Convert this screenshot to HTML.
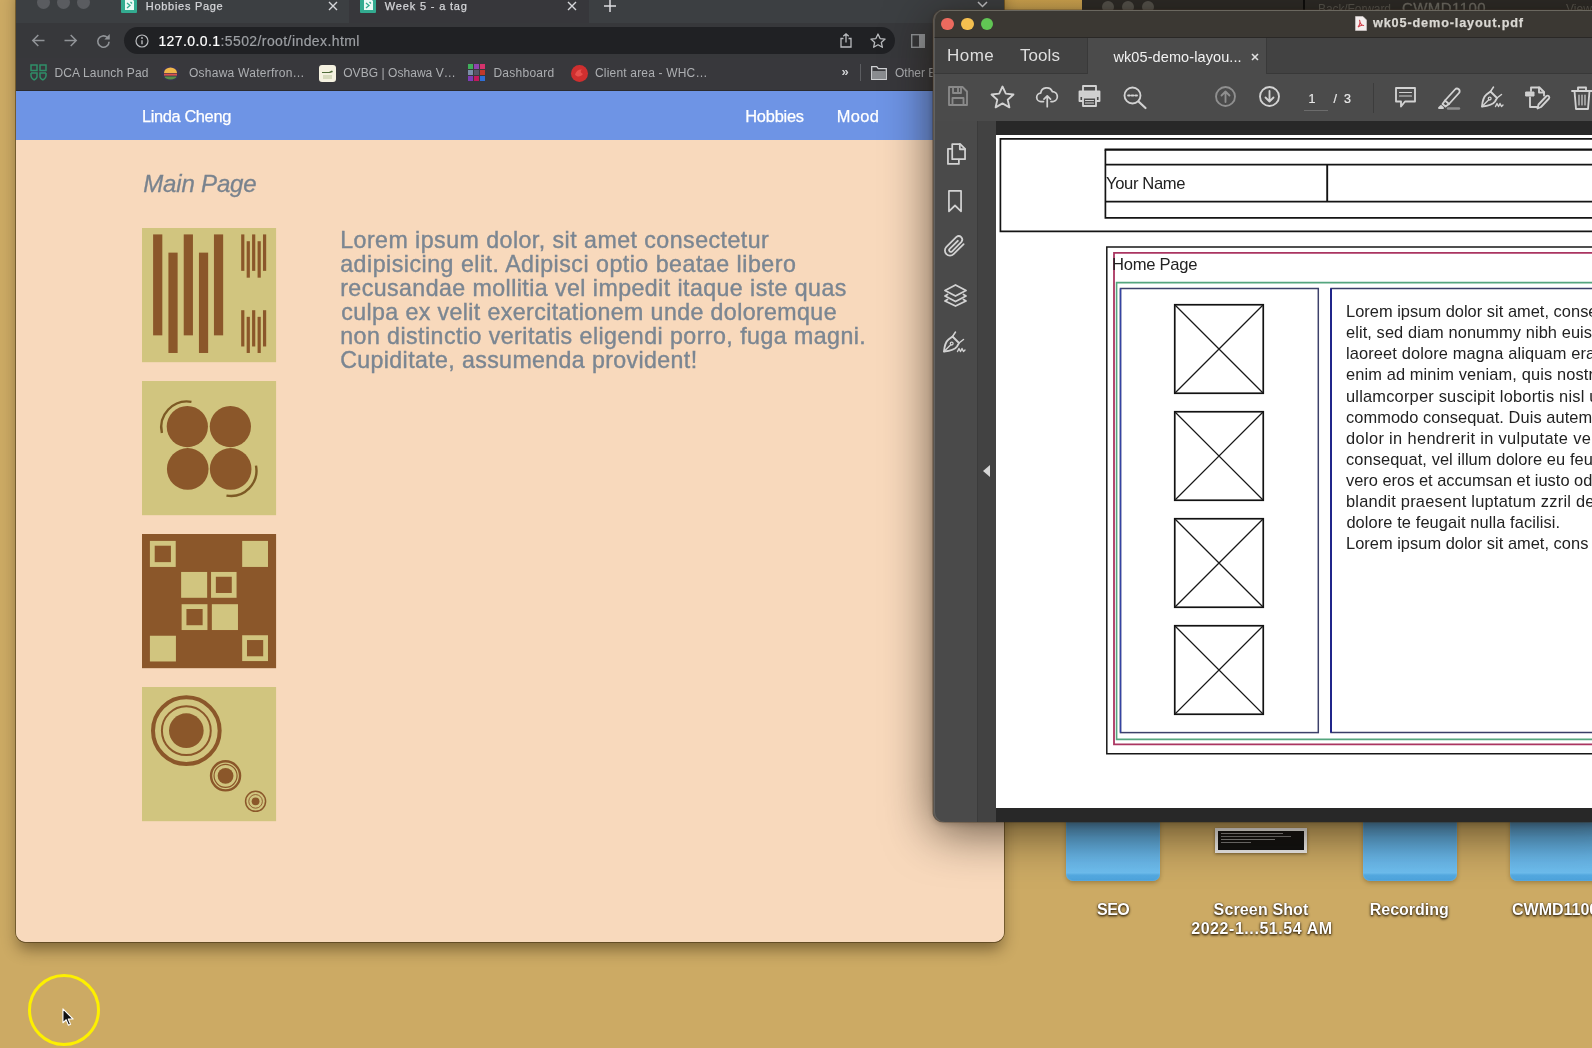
<!DOCTYPE html>
<html lang="en">
<head>
<meta charset="utf-8">
<title>Hobbies Page</title>
<style>
*{box-sizing:border-box;margin:0;padding:0}
html,body{width:1592px;height:1048px;overflow:hidden}
body{position:relative;background:#ccaa64;font-family:"Liberation Sans",sans-serif}
.abs{position:absolute}
.t{position:absolute;white-space:nowrap;line-height:1;transform-origin:0 0}
svg{position:absolute;overflow:visible}

/* ---------- browser window ---------- */
#browser{position:absolute;left:16px;top:-20px;width:988px;height:962px;border-radius:10px;background:#f8d9bc;box-shadow:0 9px 16px -2px rgba(30,18,0,.46),0 0 0 .8px rgba(60,42,10,.6);will-change:transform}
#bclip{position:absolute;left:0;top:20px;width:988px;height:942px;border-radius:0 0 10px 10px;overflow:hidden}
#tabstrip{position:absolute;left:0;top:0;width:988px;height:23px;background:#3c3f42}
#acttab{position:absolute;left:333px;top:-6px;width:240px;height:29px;border-radius:8px 8px 0 0;background:#37373b}
#toolbar{position:absolute;left:0;top:23px;width:988px;height:35px;background:#37383b}
#bookmarks{position:absolute;left:0;top:58px;width:988px;height:33px;background:#38383c;border-bottom:1px solid #2b2b2e}
#urlpill{position:absolute;left:108.4px;top:4.2px;width:771px;height:27px;border-radius:14px;background:#202124}
.bm{color:#adafb2;font-size:12px;top:9px}
.tabt{color:#d4d5d8;font-size:11px;top:.6px;-webkit-text-stroke:.25px #d4d5d8}
#nav{position:absolute;left:0;top:91px;width:988px;height:49px;background:#6e94e5}
.navt{color:#fff;font-size:16.4px;top:108px;-webkit-text-stroke:.25px #fff}
#page{position:absolute;left:0;top:140px;width:988px;height:802px;background:#f8d9bc}
#h1{color:#79838e;font-size:24px;font-style:italic;-webkit-text-stroke:.3px #79838e}
.pl{color:#7b8692;font-size:23.2px;left:324px;-webkit-text-stroke:.4px #7b8692}
.img{position:absolute;left:126.3px;width:134.1px;height:134.2px}

/* ---------- pdf window ---------- */
#pdf{position:absolute;left:933px;top:10px;width:700px;height:812px;border-radius:10px;background:#4a4a4a;box-shadow:0 10px 48px 0 rgba(20,12,0,.64),0 2px 6px 0 rgba(20,12,0,.2),0 0 0 .6px rgba(90,75,60,.55);will-change:transform}
#pclip{position:absolute;left:0;top:0;width:700px;height:812px;border-radius:10px;overflow:hidden;box-shadow:none}
#ptitle{position:absolute;left:0;top:0;width:700px;height:28px;background:#3b3833;border-top:1px solid #6a675f;border-bottom:1px solid #2a2826}
#ptabs{position:absolute;left:0;top:28px;width:700px;height:36px;background:#424242;border-bottom:1px solid #383838}
#ptabact{position:absolute;left:154.4px;top:0;width:180px;height:36px;background:#4b4b4b;border-left:1px solid #393939;border-right:1px solid #393939}
#ptool{position:absolute;left:0;top:64px;width:700px;height:46.5px;background:#4b4b4b}
#pdark{position:absolute;left:63px;top:110.5px;width:655px;height:702px;background:#282828}
#pside{position:absolute;left:0;top:110.5px;width:44px;height:702px;background:#4a4a4a}
#pgut{position:absolute;left:44px;top:110.5px;width:19px;height:702px;background:#424242;border-left:1px solid #3b3b3b}
#doc{position:absolute;left:63px;top:124.5px;width:640px;height:673.3px;background:#fff;overflow:hidden}
.ln{position:absolute;background:#1a1a1a}
.box{position:absolute;left:178.05px;width:90px;height:90px}
.dl{color:#222;font-size:16.4px;left:284px}
.ico{stroke:#d2d2d2;fill:none;stroke-width:1.85;stroke-linecap:round;stroke-linejoin:round}

/* ---------- desktop ---------- */
.folder{position:absolute;top:790px;width:94px;height:91px;border-radius:7px;background:linear-gradient(#4a86b2 0,#5094c6 36%,#5cabe0 52%,#69b9ec 76%,#6fbff0 91%,#55abe3 93.5%,#4ca2db 100%);box-shadow:0 2px 4px rgba(60,40,0,.3),inset 0 0 0 1px rgba(120,200,255,.18)}
.lbl{color:#fff;font-weight:bold;font-size:16px;text-shadow:0 1px 3px rgba(40,25,0,.9),0 1px 2px rgba(40,25,0,.7),0 0 1px rgba(40,25,0,.5)}
</style>
</head>
<body>

<!-- top desktop strip highlight -->
<div class="abs" style="left:1004px;top:0;width:78px;height:11px;background:linear-gradient(#d7ab52,#cfa654)"></div>

<!-- finder window behind -->
<div class="abs" id="finder" style="will-change:transform;left:1082px;top:-20px;width:520px;height:40px;background:#2d2b28;overflow:hidden">
  <div class="abs" style="left:221px;top:0;width:1.5px;height:40px;background:#0c0c0c"></div>
  <div class="abs" style="left:20px;top:20.5px;width:12px;height:12px;border-radius:6px;background:#56544e"></div>
  <div class="abs" style="left:40px;top:20.5px;width:12px;height:12px;border-radius:6px;background:#56544e"></div>
  <div class="abs" style="left:60px;top:20.5px;width:12px;height:12px;border-radius:6px;background:#56544e"></div>
  <span class="t" id="f1" style="left:236px;top:22.5px;font-size:12px;color:#595751;letter-spacing:-0.09px">Back/Forward</span>
  <span class="t" id="f2" style="left:320px;top:20px;font-size:15px;color:#6f6d66;-webkit-text-stroke:.3px #6f6d66;letter-spacing:0.43px">CWMD1100</span>
  <span class="t" id="f3" style="left:484px;top:22.5px;font-size:12px;color:#595751">View</span>
</div>

<div id="browser"><div id="bclip">
  <div id="tabstrip">
    <div id="acttab"></div>
    <!-- inactive traffic lights -->
    <div class="abs" style="left:20.5px;top:-4.5px;width:13px;height:13px;border-radius:6.5px;background:#5a5c60"></div>
    <div class="abs" style="left:40.5px;top:-4.5px;width:13px;height:13px;border-radius:6.5px;background:#5a5c60"></div>
    <div class="abs" style="left:60.5px;top:-4.5px;width:13px;height:13px;border-radius:6.5px;background:#5a5c60"></div>
    <!-- favicons -->
    <svg style="left:104.5px;top:-3px" width="16" height="16" viewBox="0 0 16 16"><rect width="16" height="16" rx="1" fill="#33ab90"/><path d="M4 1h6l3 3v9H4z" fill="#eafaf5"/><path d="M6 6l3 2.5L6 11M9.5 5l1.5 1.5" stroke="#33ab90" stroke-width="1.3" fill="none"/></svg>
    <span class="t tabt" id="tab1" style="left:129.8px;letter-spacing:0.71px">Hobbies Page</span>
    <svg style="left:312px;top:1px" width="10" height="10" viewBox="0 0 10 10"><path d="M1 1l8 8M9 1l-8 8" stroke="#d6d7da" stroke-width="1.4" fill="none"/></svg>
    <svg style="left:344px;top:-3px" width="16" height="16" viewBox="0 0 16 16"><rect width="16" height="16" rx="1" fill="#33ab90"/><path d="M4 1h6l3 3v9H4z" fill="#eafaf5"/><path d="M6 6l3 2.5L6 11M9.5 5l1.5 1.5" stroke="#33ab90" stroke-width="1.3" fill="none"/></svg>
    <span class="t tabt" id="tab2" style="left:368.8px;letter-spacing:0.83px">Week 5 - a tag</span>
    <svg style="left:551px;top:1px" width="10" height="10" viewBox="0 0 10 10"><path d="M1 1l8 8M9 1l-8 8" stroke="#d6d7da" stroke-width="1.4" fill="none"/></svg>
    <svg style="left:588px;top:0px" width="12" height="12" viewBox="0 0 12 12"><path d="M6 0v12M0 6h12" stroke="#dcdde0" stroke-width="1.5" fill="none"/></svg>
    <svg style="left:961px;top:1px" width="11" height="7" viewBox="0 0 11 7"><path d="M1 1l4.5 4.5L10 1" stroke="#c9cacd" stroke-width="1.5" fill="none"/></svg>
  </div>
  <div id="toolbar">
    <svg style="left:16px;top:11px" width="13" height="13" viewBox="0 0 13 13"><path d="M12.5 6.5H1M6.3 1L.8 6.5 6.3 12" stroke="#909397" stroke-width="1.5" fill="none"/></svg>
    <svg style="left:48px;top:11px" width="13" height="13" viewBox="0 0 13 13"><path d="M.5 6.5H12M6.7 1l5.5 5.5L6.7 12" stroke="#909397" stroke-width="1.5" fill="none"/></svg>
    <svg style="left:80px;top:9.5px" width="15.5" height="16" viewBox="0 0 14 15"><path d="M12 8.2A5.3 5.3 0 1 1 10.4 4.2" stroke="#909397" stroke-width="1.5" fill="none"/><path d="M12.6 1v5h-5z" fill="#909397"/></svg>
    <div id="urlpill">
      <svg style="left:11px;top:7px" width="14" height="14" viewBox="0 0 14 14"><circle cx="7" cy="7" r="6" stroke="#b9bbbe" stroke-width="1.2" fill="none"/><path d="M7 6.2v4" stroke="#b9bbbe" stroke-width="1.4"/><circle cx="7" cy="4" r=".9" fill="#b9bbbe"/></svg>
      <span class="t" id="url" style="left:34px;top:6.5px;font-size:14px;color:#fff;-webkit-text-stroke:.2px #fff;letter-spacing:0.41px">127.0.0.1<span style="color:#9c9fa3;-webkit-text-stroke:.2px #9c9fa3">:5502/root/index.html</span></span>
      <svg style="left:716px;top:6px" width="12" height="15" viewBox="0 0 12 15"><path d="M3.5 5.5H1V14h10V5.5H8.5M6 9.5V1M3.3 3.3L6 .8l2.7 2.5" stroke="#b9bbbe" stroke-width="1.3" fill="none"/></svg>
      <svg style="left:746px;top:6px" width="16" height="15" viewBox="0 0 16 15"><path d="M8 1l2.1 4.6 5 .5-3.8 3.3 1.1 4.9L8 11.8l-4.4 2.5 1.1-4.9L.9 6.1l5-.5z" stroke="#b9bbbe" stroke-width="1.3" fill="none" stroke-linejoin="round"/></svg>
    </div>
    <svg style="left:895px;top:11px" width="14" height="14" viewBox="0 0 14 14"><rect x=".7" y=".7" width="12.6" height="12.6" stroke="#909397" stroke-width="1.4" fill="none"/><rect x="8" y="1" width="5.5" height="12" fill="#909397"/></svg>
  </div>
  <div id="bookmarks">
    <svg style="left:14px;top:6px" width="17" height="17" viewBox="0 0 17 17"><g stroke="#2f8f68" stroke-width="1.5" fill="none"><rect x="1" y="1" width="6" height="5.5"/><rect x="10" y="1" width="6" height="5.5"/><path d="M1 9h6v3.5c0 2-3 3.5-3 3.5M16 9h-6v3.5c0 2 3 3.5 3 3.5M1 9v3c0 2 2.5 3.5 3 4M16 9v3c0 2-2.5 3.5-3 4"/></g></svg>
    <svg style="left:144.5px;top:7px" width="19" height="16" viewBox="0 0 19 16"><ellipse cx="9.5" cy="8" rx="9.5" ry="8" fill="#3a3558" opacity=".55"/><path d="M3 8a6.5 5.5 0 0 1 13 0z" fill="#f0b64a"/><rect x="3" y="8.6" width="13" height="2" fill="#d9534f"/><path d="M3.5 11.5h12a6 3 0 0 1-12 0z" fill="#5a8f4a"/></svg>
    <svg style="left:302.5px;top:6.5px" width="17" height="17" viewBox="0 0 17 17"><rect width="17" height="17" rx="3" fill="#f4f1e0"/><path d="M3 7h7l3-1.5 1 1.5-3 1H3z" fill="#4f6b3a"/><path d="M4 11h9M4 13h9" stroke="#b9c39a" stroke-width="1"/></svg>
    <svg style="left:452px;top:6px" width="18" height="17" viewBox="0 0 18 17"><rect x="0" y="0" width="5" height="5" fill="#3fae5a"/><rect x="6" y="0" width="5" height="5" fill="#8e44ad"/><rect x="12" y="0" width="5" height="5" fill="#d6336c"/><rect x="0" y="6" width="5" height="5" fill="#7b8ea8"/><rect x="6" y="6" width="5" height="5" fill="#556"/><rect x="12" y="6" width="5" height="5" fill="#c0392b"/><rect x="0" y="12" width="5" height="5" fill="#7d3cb5"/><rect x="6" y="12" width="5" height="5" fill="#c2185b"/><rect x="12" y="12" width="5" height="5" fill="#2f6fd6"/></svg>
    <svg style="left:555px;top:6.5px" width="17" height="17" viewBox="0 0 17 17"><circle cx="8.5" cy="8.5" r="8.5" fill="#cf2f2f"/><path d="M4 9.5C5 6 8 4 11 4.5 9 6 9.5 8 12 9c-2 3-6 3.5-8 .5z" fill="#e8504c"/></svg>
    <span class="t bm" id="bm1" style="left:38.4px;letter-spacing:0.15px">DCA Launch Pad</span>
    <span class="t bm" id="bm2" style="left:173px;letter-spacing:0.25px">Oshawa Waterfron…</span>
    <span class="t bm" id="bm3" style="left:327.2px;letter-spacing:0.05px">OVBG | Oshawa V…</span>
    <span class="t bm" id="bm4" style="left:477.4px;letter-spacing:0.27px">Dashboard</span>
    <span class="t bm" id="bm5" style="left:579px;letter-spacing:0.18px">Client area - WHC…</span>
    <span class="t" id="bm6" style="left:825.5px;top:7px;font-size:13px;font-weight:bold;color:#d0d1d4">»</span>
    <div class="abs" style="left:844px;top:6px;width:1px;height:17px;background:#5c5d61"></div>
    <svg style="left:855px;top:7.5px" width="16" height="14" viewBox="0 0 16 14"><path d="M.7 13.3V.7h5l1.6 2h8v10.6z" stroke="#d0d1d4" stroke-width="1.3" fill="none"/><rect x="1" y="5" width="14" height="8" fill="#8a8c90"/></svg>
    <span class="t bm" id="bm7" style="left:879px">Other Bookmarks</span>
  </div>
  <div id="nav">
    <span class="t navt" id="nav1" style="left:125.9px;top:16.5px;letter-spacing:-0.36px">Linda Cheng</span>
    <span class="t navt" id="nav2" style="left:729.2px;top:16.5px;letter-spacing:-0.21px">Hobbies</span>
    <span class="t navt" id="nav3" style="left:820.8px;top:16.5px;letter-spacing:0.35px">Mood</span>
  </div>
  <div id="page">
    <span class="t" id="h1" style="left:127.2px;top:32px;letter-spacing:-0.16px">Main Page</span>
    <svg class="img" style="top:88.2px" viewBox="0 0 134 134" preserveAspectRatio="none"><rect width="134" height="134" fill="#d1c57f"/><g transform="translate(1.1 0)"><g fill="#8b572a"><rect x="10" y="6.4" width="9.2" height="100.8"/><rect x="25.3" y="24.6" width="9.2" height="100.2"/><rect x="40.6" y="6.4" width="9.2" height="100.8"/><rect x="55.8" y="24.6" width="9.2" height="100.2"/><rect x="70.8" y="6.4" width="9.2" height="100.8"/><rect x="98" y="6.4" width="3.2" height="36.4"/><rect x="103.5" y="13.2" width="3.2" height="36.4"/><rect x="108.9" y="6.4" width="3.2" height="36.4"/><rect x="114.4" y="13.2" width="3.2" height="36.4"/><rect x="119.8" y="6.4" width="3.2" height="36.4"/><rect x="98" y="82.1" width="3.2" height="36.2"/><rect x="103.5" y="88.7" width="3.2" height="36.1"/><rect x="108.9" y="82.1" width="3.2" height="36.2"/><rect x="114.4" y="88.7" width="3.2" height="36.1"/><rect x="119.8" y="82.1" width="3.2" height="36.2"/></g></g></svg>
<svg class="img" style="top:241px" viewBox="0 0 134 134" preserveAspectRatio="none"><rect width="134" height="134" fill="#d1c57f"/><g transform="translate(.9 0)"><g fill="#8b572a"><circle cx="44.4" cy="45.5" r="20.6"/><circle cx="87.4" cy="45.5" r="20.6"/><circle cx="44.8" cy="87.8" r="20.8"/><circle cx="87.7" cy="87.8" r="20.8"/></g><g fill="none" stroke="#7d5a24" stroke-width="2.4"><path d="M19 52A25.8 25.8 0 0 1 48.5 20.8"/><path d="M113 84.5A25.5 25.5 0 0 1 83.5 114.4"/></g></g></svg>
<svg class="img" style="top:393.8px" viewBox="0 0 134 134" preserveAspectRatio="none"><rect width="134" height="134" fill="#8b572a"/><g transform="translate(0 0)"><g fill="#d1c57f"><rect x="100.1" y="6.9" width="25.8" height="26"/><rect x="39.1" y="37.9" width="26" height="25.8"/><rect x="69.8" y="70.1" width="26.1" height="25.8"/><rect x="7.9" y="101.6" width="26" height="25.7"/></g><g fill="none" stroke="#d1c57f" stroke-width="4.8"><rect x="10.3" y="9.3" width="21" height="21.2"/><rect x="71.4" y="40.3" width="20.7" height="21"/><rect x="42" y="72.5" width="21" height="21"/><rect x="102.5" y="103.5" width="21" height="21"/></g></g></svg>
<svg class="img" style="top:546.6px" viewBox="0 0 134 134" preserveAspectRatio="none"><rect width="134" height="134" fill="#d1c57f"/><g transform="translate(.5 0)"><g fill="#8b572a"><circle cx="43.8" cy="43.6" r="17.3"/><circle cx="83" cy="88.7" r="7.9"/><circle cx="113" cy="114.2" r="3.9"/></g><g fill="none" stroke="#8b572a"><circle cx="43.8" cy="43.6" r="33.3" stroke-width="4"/><circle cx="43.8" cy="43.6" r="24.4" stroke-width="2"/><circle cx="83" cy="88.7" r="14.5" stroke-width="2.4"/><circle cx="83" cy="88.7" r="11.5" stroke-width="1.2"/><circle cx="113" cy="114.2" r="10" stroke-width="1.5"/><circle cx="113" cy="114.2" r="6.8" stroke-width=".9"/></g></g></svg>

    <span class="t pl" id="p1" style="top:89.4px;letter-spacing:0.46px;left:324.2px">Lorem ipsum dolor, sit amet consectetur</span>
    <span class="t pl" id="p2" style="top:113.4px;letter-spacing:0.5px;left:324.2px">adipisicing elit. Adipisci optio beatae libero</span>
    <span class="t pl" id="p3" style="top:137.4px;letter-spacing:0.43px;left:324.2px">recusandae mollitia vel impedit itaque iste quas</span>
    <span class="t pl" id="p4" style="top:161.4px;letter-spacing:0.39px;left:325.2px">culpa ex velit exercitationem unde doloremque</span>
    <span class="t pl" id="p5" style="top:185.4px;letter-spacing:0.45px;left:324.2px">non distinctio veritatis eligendi porro, fuga magni.</span>
    <span class="t pl" id="p6" style="top:209.4px;letter-spacing:0.37px;left:324.2px">Cupiditate, assumenda provident!</span>
  </div>
</div></div>


<div id="desk" style="will-change:transform">
  <div class="folder" style="left:1066px"></div>
  <div class="folder" style="left:1362.5px"></div>
  <div class="folder" style="left:1510px"></div>
  <div class="abs" style="left:1215px;top:828px;width:92px;height:24.5px;background:#111;border:3px solid #f2f0ee;border-top-width:3.5px;box-shadow:0 1px 3px rgba(40,25,0,.5)">
    <div class="abs" style="left:3px;top:2px;width:62px;height:1px;background:#8a8a8a"></div>
    <div class="abs" style="left:3px;top:5px;width:70px;height:1px;background:#7a7a7a"></div>
    <div class="abs" style="left:3px;top:8px;width:54px;height:1px;background:#8a8a8a"></div>
    <div class="abs" style="left:3px;top:11px;width:30px;height:1px;background:#7a7a7a"></div>
  </div>
  <span class="t lbl" id="d1" style="left:1097px;top:901.7px;letter-spacing:-0.5px">SEO</span>
  <span class="t lbl" id="d2" style="left:1213.6px;top:901.7px;letter-spacing:0.14px">Screen Shot</span>
  <span class="t lbl" id="d3" style="left:1191.2px;top:920.6px;letter-spacing:0.56px">2022-1...51.54 AM</span>
  <span class="t lbl" id="d4" style="left:1369.8px;top:901.7px;letter-spacing:-0.03px">Recording</span>
  <span class="t lbl" id="d5" style="left:1512px;top:901.7px">CWMD1100</span>
</div>


<div id="pdf"><div id="pclip">
  <div id="ptitle">
    <div class="abs" style="left:8px;top:6.6px;width:12.5px;height:12.5px;border-radius:6.3px;background:#ec6a5e"></div>
    <div class="abs" style="left:28px;top:6.6px;width:12.5px;height:12.5px;border-radius:6.3px;background:#f4bf4f"></div>
    <div class="abs" style="left:47.5px;top:6.6px;width:12.5px;height:12.5px;border-radius:6.3px;background:#61c554"></div>
    <svg style="left:422px;top:5px" width="12" height="15" viewBox="0 0 12 15"><path d="M.5.5h7.5l3.5 3.5v10.5H.5z" fill="#f4eeee" stroke="#d9d0d0" stroke-width=".6"/><path d="M4.5 4c1 2 0 5-1.5 7 2-1.5 4-2 6-1.5-2 0-4-2-4.5-5.5z" fill="none" stroke="#d0404a" stroke-width="1.1"/></svg>
    <span class="t" id="ptt" style="left:440px;top:5.9px;font-size:12.7px;font-weight:bold;color:#dad8d3;-webkit-text-stroke:.25px #dad8d3;letter-spacing:0.85px">wk05-demo-layout.pdf</span>
  </div>
  <div id="ptabs">
    <div id="ptabact"></div>
    <span class="t" id="pt1" style="left:14.1px;top:9px;font-size:17px;color:#dedede;letter-spacing:0.43px">Home</span>
    <span class="t" id="pt2" style="left:87.1px;top:9px;font-size:17px;color:#dedede;letter-spacing:0.03px">Tools</span>
    <span class="t" id="pt3" style="left:180.4px;top:12px;font-size:14.5px;color:#f2f2f2;letter-spacing:0.1px">wk05-demo-layou...</span>
    <svg style="left:317.8px;top:14.8px" width="8" height="8" viewBox="0 0 8 8"><path d="M1 1l6 6M7 1L1 7" stroke="#e0e0e0" stroke-width="1.6" fill="none"/></svg>
  </div>
  <div id="ptool">
    <!-- save -->
    <svg class="ico" style="left:15px;top:12.3px;stroke:#8a8a8a" width="20" height="20" viewBox="0 0 20 20"><path d="M1 1h13.5L19 5.5V19H1z"/><path d="M5 1v6h8V1M4.5 19v-7h11v7M10 2.5v3"/></svg>
    <!-- star -->
    <svg class="ico" style="left:56.5px;top:10.8px" width="25" height="24" viewBox="0 0 25 24"><path d="M12.5 1.5l3.3 7.2 7.7.8-5.8 5.2 1.7 7.7-6.9-4-6.9 4 1.7-7.7L1.5 9.5l7.7-.8z"/></svg>
    <!-- cloud upload -->
    <svg class="ico" style="left:102.5px;top:12.8px" width="22.5" height="20.6" viewBox="0 0 24 22"><path d="M8 15.5H5.5a4.5 4.5 0 0 1-.5-9A6.5 6.5 0 0 1 17.5 5a5.3 5.3 0 0 1 1 10.5H16"/><path d="M12 21V10M8.5 13L12 9.5l3.5 3.5"/></svg>
    <!-- print -->
    <svg class="ico" style="left:145px;top:11.3px" width="23" height="22" viewBox="0 0 23 22"><path d="M5 6.5V1h13v5.5M5 16H1.5V6.5h20V16H18M5 12.5h13V21H5z"/><path d="M2 7h19v5H2z" fill="#cfcfcf" stroke="none"/><path d="M7.5 15.5h8M7.5 18h8" stroke-width="1.2"/></svg>
    <!-- zoom -->
    <svg class="ico" style="left:190px;top:12.3px" width="24" height="24" viewBox="0 0 24 24"><circle cx="9.5" cy="9.5" r="8"/><path d="M15.5 15.5L22.5 22" stroke-width="2.2"/><path d="M5.2 9.5h1.5M8.8 9.5h1.5M12.4 9.5h1.5" stroke-width="2.2"/></svg>
    <!-- up / down -->
    <svg class="ico" style="left:281.5px;top:12.3px;stroke:#8f8f8f" width="21" height="21" viewBox="0 0 21 21"><circle cx="10.5" cy="10.5" r="9.5"/><path d="M10.5 16V5.5M6.5 9.5l4-4 4 4"/></svg>
    <svg class="ico" style="left:325.5px;top:12.3px" width="21" height="21" viewBox="0 0 21 21"><circle cx="10.5" cy="10.5" r="9.5"/><path d="M10.5 5v10.5M6.5 11.5l4 4 4-4"/></svg>
    <span class="t" id="pg1" style="left:375.4px;top:18.8px;font-size:12.5px;color:#e9e9e9;-webkit-text-stroke:.2px #e9e9e9">1</span>
    <div class="abs" style="left:370.5px;top:35.6px;width:24.5px;height:1px;background:#6c6c6c"></div>
    <span class="t" id="pg2" style="left:400.6px;top:18.8px;font-size:12.5px;color:#e9e9e9;-webkit-text-stroke:.2px #e9e9e9">/&nbsp; 3</span>
    <div class="abs" style="left:440px;top:8.5px;width:1px;height:30px;background:#3c3c3c"></div>
    <!-- comment -->
    <svg class="ico" style="left:462px;top:13.3px" width="21" height="22" viewBox="0 0 21 22"><path d="M1 1h19v13.5H10L6 19.5v-5H1z"/><path d="M4.5 5.5h12M4.5 9h12" stroke-width="1.2"/></svg>
    <!-- highlighter -->
    <svg class="ico" style="left:504.5px;top:12.8px" width="24" height="23" viewBox="0 0 24 23"><path d="M7 13.5L17 2.5a2.6 2.6 0 0 1 4 3.5L11 17z"/><path d="M7 13.5l-2.5 3.5 3 2.5L11 17"/><path d="M1 21l2-2 2 2z" fill="#cfcfcf"/><path d="M10 21.5h11" stroke="#8e8e8e" stroke-width="2.4"/></svg>
    <!-- sign -->
    <svg class="ico" style="left:547.5px;top:12.3px" width="24" height="23" viewBox="0 0 24 23"><path d="M1 20.5C1.5 14.5 3 10.5 5.5 8.5L9.5 5.5l6.5 6.5-2 3.5C12 18.5 7 20 1 20.5z"/><path d="M9.5 5.5L12.5 1M16 12l4.5-3.5M1 20.5l6.5-6.5" stroke-width="1.5"/><circle cx="8.7" cy="12.6" r="1.4" stroke-width="1.3"/><path d="M14.5 20.5l1.5-3 1.5 3 1.5-3 1.5 3 1.5-1.5" stroke-width="1.4"/></svg>
    <!-- doc edit -->
    <svg class="ico" style="left:591.5px;top:11.8px" width="25" height="24" viewBox="0 0 25 24"><path d="M6 5V1.5h8.5L19 6v3.5M5 11.5V21h8"/><path d="M14 1.5V6.5h5"/><path d="M1 6h8v4H1z" fill="#cfcfcf" stroke-width="1"/><path d="M12.5 22.5l1-4L21.5 10a1.8 1.8 0 0 1 2.5 2.5L16 21z"/></svg>
    <!-- trash -->
    <svg class="ico" style="left:637.5px;top:11.8px" width="22" height="24" viewBox="0 0 22 24"><path d="M1 5h20M7 5V1.5h8V5M3.5 5l1.5 18h12l1.5-18"/><path d="M8 9v10M11 9v10M14 9v10" stroke-width="1.2"/></svg>
  </div>
  <div id="pdark"></div>
  <div id="pside">
    <!-- pages -->
    <svg class="ico" style="left:14px;top:22.5px" width="19" height="22" viewBox="0 0 20 23"><path d="M5.5 17V1h8.5L19 6v11z"/><path d="M13.5 1v5.5H19"/><path d="M5 6H1v16h11.5v-4.5"/></svg>
    <!-- bookmark -->
    <svg class="ico" style="left:15.1px;top:69.5px" width="14" height="22.3" viewBox="0 0 15 23" preserveAspectRatio="none"><path d="M1 1h13v21l-6.5-6L1 22z"/></svg>
    <!-- paperclip -->
    <svg class="ico" style="left:11px;top:114.8px" width="23" height="23" viewBox="0 0 24 24"><path d="M20.5 9.5L10 20a5.3 5.3 0 0 1-7.5-7.5L13 2a3.7 3.7 0 0 1 5.2 5.2L8.5 17a1.8 1.8 0 0 1-2.6-2.6L14.5 6"/></svg>
    <!-- layers -->
    <svg class="ico" style="left:11.1px;top:163.3px" width="23" height="23" viewBox="0 0 23 23"><path d="M11.5 1L22 6.5l-10.5 5.5L1 6.5z"/><path d="M3.5 10.5L1 12l10.5 5.5L22 12l-2.5-1.5"/><path d="M3.5 15.5L1 17l10.5 5L22 17l-2.5-1.5"/></svg>
    <!-- sign -->
    <svg class="ico" style="left:10px;top:210.1px" width="24" height="23" viewBox="0 0 24 23"><path d="M1 20.5C1.5 14.5 3 10.5 5.5 8.5L9.5 5.5l6.5 6.5-2 3.5C12 18.5 7 20 1 20.5z"/><path d="M9.5 5.5L12.5 1M16 12l4.5-3.5M1 20.5l6.5-6.5" stroke-width="1.5"/><circle cx="8.7" cy="12.6" r="1.4" stroke-width="1.3"/><path d="M14.5 20.5l1.5-3 1.5 3 1.5-3 1.5 3 1.5-1.5" stroke-width="1.4"/></svg>
  </div>
  <div id="pgut">
    <svg style="left:4.5px;top:344.5px" width="7" height="12" viewBox="0 0 7 12"><path d="M7 0v12L0 6z" fill="#d6d6d6"/></svg>
  </div>
  <div id="doc">
        <svg style="left:0;top:0" width="640" height="674" viewBox="0 0 640 674" fill="none">
      <path d="M700 3.8H4.4V96.3H700" stroke="#141414" stroke-width="1.7"/>
      <path d="M108.6 14.7H700" stroke="#0e0e0e" stroke-width="2.3"/>
      <path d="M109.4 14.7V82.8H700M109.4 29.6H700M109.4 66.7H700" stroke="#141414" stroke-width="1.7"/>
      <path d="M331.2 29.6V66.7" stroke="#141414" stroke-width="1.9"/>
      <path d="M700 112H110.8V618.7H700" stroke="#171717" stroke-width="1.5"/>
      <path d="M700 117.8H118V609.4H700" stroke="#aa3561" stroke-width="1.8"/>
      <path d="M700 147.6H120.6V604.4H700" stroke="#55a57f" stroke-width="1.6"/>
      <rect x="124.5" y="153.5" width="197.8" height="444.1" stroke="#3d416a" stroke-width="1.5"/>
      <path d="M124.5 153.5V597.6" stroke="#3543a2" stroke-width="1.5"/>
      <path d="M700 153.5H335V597.6H700" stroke="#3a3e68" stroke-width="1.5"/>
      <path d="M335 153.5V597.6" stroke="#20258a" stroke-width="2"/>
    </svg>
    <span class="t" id="dn" style="left:110px;top:41.6px;font-size:16.6px;color:#222;letter-spacing:-0.37px">Your Name</span>
    <span class="t" id="dh" style="left:116px;top:122.9px;font-size:16.6px;color:#222;letter-spacing:-0.28px">Home Page</span>
    <svg class="box" style="top:169.25px" viewBox="0 0 90 90"><rect x=".75" y=".75" width="88.5" height="88.5" fill="none" stroke="#121212" stroke-width="1.7"/><path d="M.75.75l88.5 88.5M89.25.75L.75 89.25" stroke="#181818" stroke-width="1.25" fill="none"/></svg>
    <svg class="box" style="top:276.65px" viewBox="0 0 90 90"><rect x=".75" y=".75" width="88.5" height="88.5" fill="none" stroke="#121212" stroke-width="1.7"/><path d="M.75.75l88.5 88.5M89.25.75L.75 89.25" stroke="#181818" stroke-width="1.25" fill="none"/></svg>
    <svg class="box" style="top:383.65px" viewBox="0 0 90 90"><rect x=".75" y=".75" width="88.5" height="88.5" fill="none" stroke="#121212" stroke-width="1.7"/><path d="M.75.75l88.5 88.5M89.25.75L.75 89.25" stroke="#181818" stroke-width="1.25" fill="none"/></svg>
    <svg class="box" style="top:490.45px" viewBox="0 0 90 90"><rect x=".75" y=".75" width="88.5" height="88.5" fill="none" stroke="#121212" stroke-width="1.7"/><path d="M.75.75l88.5 88.5M89.25.75L.75 89.25" stroke="#181818" stroke-width="1.25" fill="none"/></svg>
    <span class="t dl" id="dl1" style="left:350px;top:168.6px;letter-spacing:0.03px">Lorem ipsum dolor sit amet, consectetuer adipiscing</span>
    <span class="t dl" id="dl2" style="left:350px;top:189.8px;letter-spacing:0.09px">elit, sed diam nonummy nibh euismod tincidunt ut</span>
    <span class="t dl" id="dl3" style="left:350px;top:210.8px;letter-spacing:0.13px">laoreet dolore magna aliquam erat volutpat. Ut wisi</span>
    <span class="t dl" id="dl4" style="left:350px;top:231.9px;letter-spacing:0.12px">enim ad minim veniam, quis nostrud exerci tation</span>
    <span class="t dl" id="dl5" style="left:350px;top:253.0px;letter-spacing:0.21px">ullamcorper suscipit lobortis nisl ut aliquip ex ea</span>
    <span class="t dl" id="dl6" style="left:350px;top:274.2px;letter-spacing:0.07px">commodo consequat. Duis autem vel eum iriure</span>
    <span class="t dl" id="dl7" style="left:350px;top:295.2px;letter-spacing:0.35px">dolor in hendrerit in vulputate velit esse molestie</span>
    <span class="t dl" id="dl8" style="left:350px;top:316.4px;letter-spacing:0.08px">consequat, vel illum dolore eu feugiat nulla facilisis at</span>
    <span class="t dl" id="dl9" style="left:350px;top:337.4px;letter-spacing:0.01px">vero eros et accumsan et iusto odio dignissim qui</span>
    <span class="t dl" id="dl10" style="left:350px;top:358.6px;letter-spacing:0.24px">blandit praesent luptatum zzril delenit augue duis</span>
    <span class="t dl" id="dl11" style="left:350.4px;top:379.6px;letter-spacing:0.1px">dolore te feugait nulla facilisi.</span>
    <span class="t dl" id="dl12" style="left:350px;top:400.8px;letter-spacing:0.03px">Lorem ipsum dolor sit amet, cons ectetuer adipiscing</span>

  </div>
  <div class="abs" id="pedge" style="left:0;top:0;width:700px;height:812px;border-radius:10px;box-shadow:inset 1px 0 0 #5e564c,inset 2px 0 0 rgba(255,255,255,.13);pointer-events:none"></div>
</div></div>


<div id="cursor">
  <div class="abs" style="left:28.2px;top:973.8px;width:72px;height:72px;border-radius:50%;border:3px solid #fdf000"></div>
  <svg style="left:62px;top:1007.5px" width="12" height="18.5" viewBox="0 0 13 20"><path d="M1 1v15l3.5-3.3 2.5 6 2.3-1-2.5-5.8H12z" fill="#111" stroke="#fff" stroke-width="1.2" stroke-linejoin="round"/></svg>
</div>


</body>
</html>
